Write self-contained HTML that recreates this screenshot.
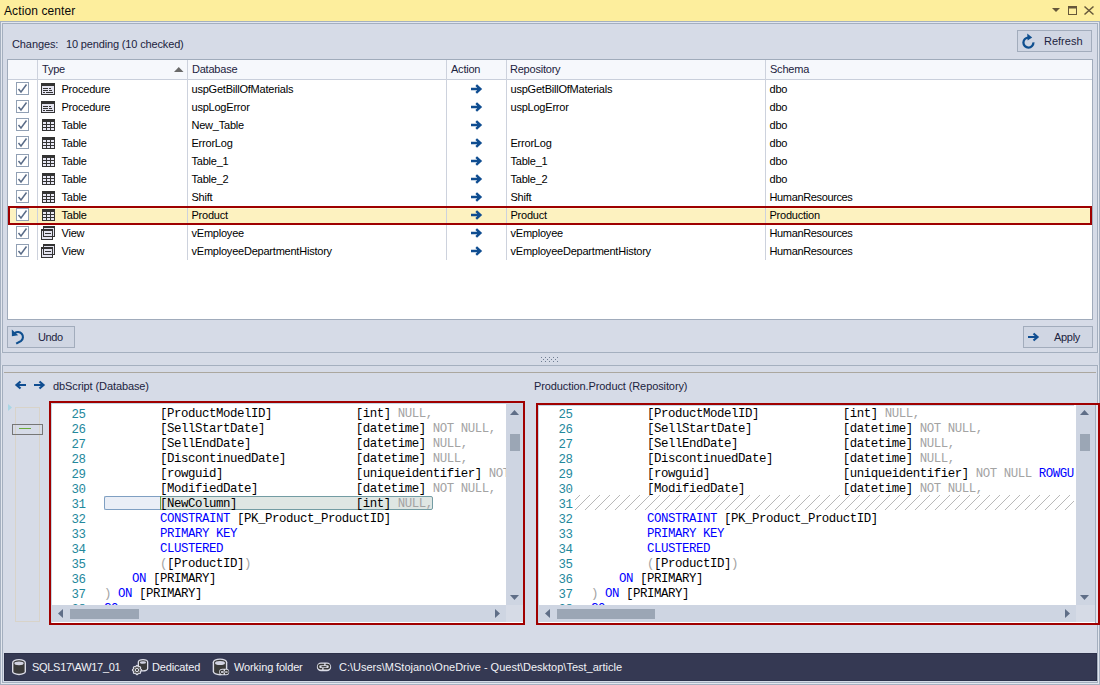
<!DOCTYPE html><html><head><meta charset="utf-8"><style>
*{margin:0;padding:0;box-sizing:border-box}
html,body{width:1100px;height:685px;overflow:hidden;background:#d6dbe7;font-family:"Liberation Sans",sans-serif;font-size:11px;color:#1e1e1e}
.a{position:absolute}
.t{position:absolute;white-space:pre;line-height:13px}
.g{position:absolute;white-space:pre;line-height:13px;letter-spacing:-0.22px;color:#000}
.code{font-family:"Liberation Mono",monospace;font-size:12.4px;letter-spacing:-0.44px;white-space:pre;position:absolute;line-height:15px;color:#000}
.ln{color:#23889c}
.kw{color:#0000ff}
.gr{color:#a3a3a3}
svg{position:absolute;overflow:visible}
</style></head><body>
<div class="a" style="left:0;top:0;width:1100px;height:21px;background:#fdee9d"></div>
<div class="t" style="left:4px;top:5px;font-size:12px;color:#0a0a0a;letter-spacing:0.1px">Action center</div>
<svg style="left:0;top:0" width="1100" height="21"><path d="M1052 8 L1060 8 L1056 12 Z" fill="#65573a"/><rect x="1068.5" y="6.5" width="8" height="8" fill="none" stroke="#65573a"/><rect x="1068" y="6" width="9" height="2.5" fill="#65573a"/><path d="M1084.5 6.5 L1093.5 14.5 M1093.5 6.5 L1084.5 14.5" stroke="#65573a" stroke-width="1.5"/></svg>
<div class="a" style="left:0;top:21px;width:1100px;height:664px;background:#a5b0c0"></div>
<div class="a" style="left:1px;top:22px;width:1098px;height:662px;background:#e2e6ee"></div>
<div class="a" style="left:2px;top:23px;width:1096px;height:330px;border:1px solid #a4afbf;background:#d6dbe7"></div>
<div class="a" style="left:1px;top:353px;width:1098px;height:12px;background:#d6dbe7"></div>
<div class="a" style="left:2px;top:365px;width:1096px;height:318px;border:1px solid #a4afbf;background:#d6dbe7"></div>
<div class="a" style="left:4px;top:372px;width:1092px;height:1px;background:#aba79f"></div>
<svg style="left:0;top:0" width="1100" height="685" fill="#6f7d92"><rect x="541" y="357" width="1" height="1"/><rect x="541" y="361" width="1" height="1"/><rect x="545" y="357" width="1" height="1"/><rect x="545" y="361" width="1" height="1"/><rect x="549" y="357" width="1" height="1"/><rect x="549" y="361" width="1" height="1"/><rect x="553" y="357" width="1" height="1"/><rect x="553" y="361" width="1" height="1"/><rect x="557" y="357" width="1" height="1"/><rect x="557" y="361" width="1" height="1"/><rect x="543" y="359" width="1" height="1"/><rect x="547" y="359" width="1" height="1"/><rect x="551" y="359" width="1" height="1"/><rect x="555" y="359" width="1" height="1"/></svg>
<div class="t" style="left:12px;top:38px;color:#1c2340;letter-spacing:-0.1px">Changes:</div>
<div class="t" style="left:66px;top:38px;color:#1c2340;letter-spacing:-0.15px">10 pending (10 checked)</div>
<div class="a" style="left:1017px;top:30px;width:75px;height:22px;border:1px solid #a2acbc;background:#d0d6e3"></div>
<svg style="left:0;top:0" width="1100" height="60"><path d="M1028.5 37.6 A5 5 0 1 0 1033.4 42.4" fill="none" stroke="#0f4f8f" stroke-width="2.3"/><path d="M1027.2 33.6 L1032.2 37.4 L1027.6 40.6 Z" fill="#0f4f8f"/></svg>
<div class="t" style="left:1044px;top:35px;color:#1c2340">Refresh</div>
<div class="a" style="left:7px;top:59px;width:1086px;height:261px;border:1px solid #a0abbb;background:#fff"></div>
<div class="a" style="left:8px;top:60px;width:1084px;height:19px;background:#f6f8fc"></div>
<div class="a" style="left:8px;top:79px;width:1084px;height:1px;background:#c9cfdb"></div>
<div class="a" style="left:10px;top:208px;width:1080px;height:15px;background:#fdf2c0"></div>
<div class="a" style="left:10px;top:208px;width:1080px;height:1px;background:#fffad2"></div>
<div class="a" style="left:37px;top:60px;width:1px;height:200px;background:#cdd2dd"></div>
<div class="a" style="left:187px;top:60px;width:1px;height:200px;background:#cdd2dd"></div>
<div class="a" style="left:446px;top:60px;width:1px;height:200px;background:#cdd2dd"></div>
<div class="a" style="left:506px;top:60px;width:1px;height:200px;background:#cdd2dd"></div>
<div class="a" style="left:765px;top:60px;width:1px;height:200px;background:#cdd2dd"></div>
<div class="a" style="left:8px;top:206px;width:1084px;height:19px;border:2px solid #9e0000"></div>
<div class="g" style="left:42px;top:63px;color:#1c2340">Type</div>
<div class="g" style="left:192px;top:63px;color:#1c2340">Database</div>
<div class="g" style="left:451px;top:63px;color:#1c2340">Action</div>
<div class="g" style="left:510px;top:63px;color:#1c2340">Repository</div>
<div class="g" style="left:770px;top:63px;color:#1c2340">Schema</div>
<svg style="left:0;top:0" width="1100" height="100"><path d="M174 72 L183.5 72 L178.75 67 Z" fill="#6a6a6a"/></svg>
<div class="g" style="left:61.5px;top:83px">Procedure</div>
<div class="g" style="left:191.5px;top:83px">uspGetBillOfMaterials</div>
<div class="g" style="left:510.5px;top:83px">uspGetBillOfMaterials</div>
<div class="g" style="left:769.5px;top:83px">dbo</div>
<div class="g" style="left:61.5px;top:101px">Procedure</div>
<div class="g" style="left:191.5px;top:101px">uspLogError</div>
<div class="g" style="left:510.5px;top:101px">uspLogError</div>
<div class="g" style="left:769.5px;top:101px">dbo</div>
<div class="g" style="left:61.5px;top:119px">Table</div>
<div class="g" style="left:191.5px;top:119px">New_Table</div>
<div class="g" style="left:769.5px;top:119px">dbo</div>
<div class="g" style="left:61.5px;top:137px">Table</div>
<div class="g" style="left:191.5px;top:137px">ErrorLog</div>
<div class="g" style="left:510.5px;top:137px">ErrorLog</div>
<div class="g" style="left:769.5px;top:137px">dbo</div>
<div class="g" style="left:61.5px;top:155px">Table</div>
<div class="g" style="left:191.5px;top:155px">Table_1</div>
<div class="g" style="left:510.5px;top:155px">Table_1</div>
<div class="g" style="left:769.5px;top:155px">dbo</div>
<div class="g" style="left:61.5px;top:173px">Table</div>
<div class="g" style="left:191.5px;top:173px">Table_2</div>
<div class="g" style="left:510.5px;top:173px">Table_2</div>
<div class="g" style="left:769.5px;top:173px">dbo</div>
<div class="g" style="left:61.5px;top:191px">Table</div>
<div class="g" style="left:191.5px;top:191px">Shift</div>
<div class="g" style="left:510.5px;top:191px">Shift</div>
<div class="g" style="left:769.5px;top:191px;letter-spacing:-0.36px">HumanResources</div>
<div class="g" style="left:61.5px;top:209px">Table</div>
<div class="g" style="left:191.5px;top:209px">Product</div>
<div class="g" style="left:510.5px;top:209px">Product</div>
<div class="g" style="left:769.5px;top:209px">Production</div>
<div class="g" style="left:61.5px;top:227px">View</div>
<div class="g" style="left:191.5px;top:227px">vEmployee</div>
<div class="g" style="left:510.5px;top:227px">vEmployee</div>
<div class="g" style="left:769.5px;top:227px;letter-spacing:-0.36px">HumanResources</div>
<div class="g" style="left:61.5px;top:245px">View</div>
<div class="g" style="left:191.5px;top:245px">vEmployeeDepartmentHistory</div>
<div class="g" style="left:510.5px;top:245px">vEmployeeDepartmentHistory</div>
<div class="g" style="left:769.5px;top:245px;letter-spacing:-0.36px">HumanResources</div>
<svg style="left:0;top:0" width="1100" height="330"><rect x="16.5" y="82.5" width="12" height="12" fill="#fff" stroke="#91a0b4"/><path d="M18.5 89 L21 92 L26.5 84.5" fill="none" stroke="#5a6c88" stroke-width="1.5"/><path d="M471 89 L480 89 M476.2 85.2 L480.4 89 L476.2 92.8" fill="none" stroke="#0f4d91" stroke-width="2.4"/><rect x="41.5" y="83.5" width="13" height="11" fill="#e4e4f0" stroke="#333"/><rect x="41" y="83" width="14" height="3" fill="#333"/><path d="M43 88.5h5M49 88.5h2M43 90.5h5M49 90.5h3M43 92.5h2M46 92.5h7" stroke="#333" stroke-width="1"/><rect x="16.5" y="100.5" width="12" height="12" fill="#fff" stroke="#91a0b4"/><path d="M18.5 107 L21 110 L26.5 102.5" fill="none" stroke="#5a6c88" stroke-width="1.5"/><path d="M471 107 L480 107 M476.2 103.2 L480.4 107 L476.2 110.8" fill="none" stroke="#0f4d91" stroke-width="2.4"/><rect x="41.5" y="101.5" width="13" height="11" fill="#e4e4f0" stroke="#333"/><rect x="41" y="101" width="14" height="3" fill="#333"/><path d="M43 106.5h5M49 106.5h2M43 108.5h5M49 108.5h3M43 110.5h2M46 110.5h7" stroke="#333" stroke-width="1"/><rect x="16.5" y="118.5" width="12" height="12" fill="#fff" stroke="#91a0b4"/><path d="M18.5 125 L21 128 L26.5 120.5" fill="none" stroke="#5a6c88" stroke-width="1.5"/><path d="M471 125 L480 125 M476.2 121.2 L480.4 125 L476.2 128.8" fill="none" stroke="#0f4d91" stroke-width="2.4"/><rect x="42" y="119" width="13" height="12" fill="#333"/><rect x="43" y="122" width="3" height="2" fill="#e8e8f4"/><rect x="43" y="125" width="3" height="2" fill="#e8e8f4"/><rect x="43" y="128" width="3" height="2" fill="#e8e8f4"/><rect x="47" y="122" width="3" height="2" fill="#e8e8f4"/><rect x="47" y="125" width="3" height="2" fill="#e8e8f4"/><rect x="47" y="128" width="3" height="2" fill="#e8e8f4"/><rect x="51" y="122" width="3" height="2" fill="#e8e8f4"/><rect x="51" y="125" width="3" height="2" fill="#e8e8f4"/><rect x="51" y="128" width="3" height="2" fill="#e8e8f4"/><rect x="16.5" y="136.5" width="12" height="12" fill="#fff" stroke="#91a0b4"/><path d="M18.5 143 L21 146 L26.5 138.5" fill="none" stroke="#5a6c88" stroke-width="1.5"/><path d="M471 143 L480 143 M476.2 139.2 L480.4 143 L476.2 146.8" fill="none" stroke="#0f4d91" stroke-width="2.4"/><rect x="42" y="137" width="13" height="12" fill="#333"/><rect x="43" y="140" width="3" height="2" fill="#e8e8f4"/><rect x="43" y="143" width="3" height="2" fill="#e8e8f4"/><rect x="43" y="146" width="3" height="2" fill="#e8e8f4"/><rect x="47" y="140" width="3" height="2" fill="#e8e8f4"/><rect x="47" y="143" width="3" height="2" fill="#e8e8f4"/><rect x="47" y="146" width="3" height="2" fill="#e8e8f4"/><rect x="51" y="140" width="3" height="2" fill="#e8e8f4"/><rect x="51" y="143" width="3" height="2" fill="#e8e8f4"/><rect x="51" y="146" width="3" height="2" fill="#e8e8f4"/><rect x="16.5" y="154.5" width="12" height="12" fill="#fff" stroke="#91a0b4"/><path d="M18.5 161 L21 164 L26.5 156.5" fill="none" stroke="#5a6c88" stroke-width="1.5"/><path d="M471 161 L480 161 M476.2 157.2 L480.4 161 L476.2 164.8" fill="none" stroke="#0f4d91" stroke-width="2.4"/><rect x="42" y="155" width="13" height="12" fill="#333"/><rect x="43" y="158" width="3" height="2" fill="#e8e8f4"/><rect x="43" y="161" width="3" height="2" fill="#e8e8f4"/><rect x="43" y="164" width="3" height="2" fill="#e8e8f4"/><rect x="47" y="158" width="3" height="2" fill="#e8e8f4"/><rect x="47" y="161" width="3" height="2" fill="#e8e8f4"/><rect x="47" y="164" width="3" height="2" fill="#e8e8f4"/><rect x="51" y="158" width="3" height="2" fill="#e8e8f4"/><rect x="51" y="161" width="3" height="2" fill="#e8e8f4"/><rect x="51" y="164" width="3" height="2" fill="#e8e8f4"/><rect x="16.5" y="172.5" width="12" height="12" fill="#fff" stroke="#91a0b4"/><path d="M18.5 179 L21 182 L26.5 174.5" fill="none" stroke="#5a6c88" stroke-width="1.5"/><path d="M471 179 L480 179 M476.2 175.2 L480.4 179 L476.2 182.8" fill="none" stroke="#0f4d91" stroke-width="2.4"/><rect x="42" y="173" width="13" height="12" fill="#333"/><rect x="43" y="176" width="3" height="2" fill="#e8e8f4"/><rect x="43" y="179" width="3" height="2" fill="#e8e8f4"/><rect x="43" y="182" width="3" height="2" fill="#e8e8f4"/><rect x="47" y="176" width="3" height="2" fill="#e8e8f4"/><rect x="47" y="179" width="3" height="2" fill="#e8e8f4"/><rect x="47" y="182" width="3" height="2" fill="#e8e8f4"/><rect x="51" y="176" width="3" height="2" fill="#e8e8f4"/><rect x="51" y="179" width="3" height="2" fill="#e8e8f4"/><rect x="51" y="182" width="3" height="2" fill="#e8e8f4"/><rect x="16.5" y="190.5" width="12" height="12" fill="#fff" stroke="#91a0b4"/><path d="M18.5 197 L21 200 L26.5 192.5" fill="none" stroke="#5a6c88" stroke-width="1.5"/><path d="M471 197 L480 197 M476.2 193.2 L480.4 197 L476.2 200.8" fill="none" stroke="#0f4d91" stroke-width="2.4"/><rect x="42" y="191" width="13" height="12" fill="#333"/><rect x="43" y="194" width="3" height="2" fill="#e8e8f4"/><rect x="43" y="197" width="3" height="2" fill="#e8e8f4"/><rect x="43" y="200" width="3" height="2" fill="#e8e8f4"/><rect x="47" y="194" width="3" height="2" fill="#e8e8f4"/><rect x="47" y="197" width="3" height="2" fill="#e8e8f4"/><rect x="47" y="200" width="3" height="2" fill="#e8e8f4"/><rect x="51" y="194" width="3" height="2" fill="#e8e8f4"/><rect x="51" y="197" width="3" height="2" fill="#e8e8f4"/><rect x="51" y="200" width="3" height="2" fill="#e8e8f4"/><rect x="16.5" y="208.5" width="12" height="12" fill="#fff" stroke="#91a0b4"/><path d="M18.5 215 L21 218 L26.5 210.5" fill="none" stroke="#5a6c88" stroke-width="1.5"/><path d="M471 215 L480 215 M476.2 211.2 L480.4 215 L476.2 218.8" fill="none" stroke="#0f4d91" stroke-width="2.4"/><rect x="42" y="209" width="13" height="12" fill="#333"/><rect x="43" y="212" width="3" height="2" fill="#e8e8f4"/><rect x="43" y="215" width="3" height="2" fill="#e8e8f4"/><rect x="43" y="218" width="3" height="2" fill="#e8e8f4"/><rect x="47" y="212" width="3" height="2" fill="#e8e8f4"/><rect x="47" y="215" width="3" height="2" fill="#e8e8f4"/><rect x="47" y="218" width="3" height="2" fill="#e8e8f4"/><rect x="51" y="212" width="3" height="2" fill="#e8e8f4"/><rect x="51" y="215" width="3" height="2" fill="#e8e8f4"/><rect x="51" y="218" width="3" height="2" fill="#e8e8f4"/><rect x="16.5" y="226.5" width="12" height="12" fill="#fff" stroke="#91a0b4"/><path d="M18.5 233 L21 236 L26.5 228.5" fill="none" stroke="#5a6c88" stroke-width="1.5"/><path d="M471 233 L480 233 M476.2 229.2 L480.4 233 L476.2 236.8" fill="none" stroke="#0f4d91" stroke-width="2.4"/><rect x="43.5" y="226.5" width="11" height="10" fill="#e4e4f0" stroke="#333"/><rect x="41.5" y="229.5" width="11" height="10" fill="#e4e4f0" stroke="#333"/><rect x="43.5" y="226.5" width="11" height="10" fill="none" stroke="#333"/><rect x="43" y="226" width="12" height="2" fill="#333"/><rect x="41" y="229" width="12" height="2" fill="#333"/><path d="M45 233.5h6" stroke="#333"/><rect x="16.5" y="244.5" width="12" height="12" fill="#fff" stroke="#91a0b4"/><path d="M18.5 251 L21 254 L26.5 246.5" fill="none" stroke="#5a6c88" stroke-width="1.5"/><path d="M471 251 L480 251 M476.2 247.2 L480.4 251 L476.2 254.8" fill="none" stroke="#0f4d91" stroke-width="2.4"/><rect x="43.5" y="244.5" width="11" height="10" fill="#e4e4f0" stroke="#333"/><rect x="41.5" y="247.5" width="11" height="10" fill="#e4e4f0" stroke="#333"/><rect x="43.5" y="244.5" width="11" height="10" fill="none" stroke="#333"/><rect x="43" y="244" width="12" height="2" fill="#333"/><rect x="41" y="247" width="12" height="2" fill="#333"/><path d="M45 251.5h6" stroke="#333"/></svg>
<div class="a" style="left:7px;top:326px;width:68px;height:22px;border:1px solid #a2acbc;background:#d0d6e3"></div>
<div class="t" style="left:38px;top:331px;color:#1c2340;letter-spacing:-0.4px">Undo</div>
<div class="a" style="left:1023px;top:326px;width:70px;height:22px;border:1px solid #a2acbc;background:#d0d6e3"></div>
<div class="t" style="left:1054px;top:331px;color:#1c2340;letter-spacing:-0.3px">Apply</div>
<svg style="left:0;top:0" width="1100" height="400"><path d="M14.6 333.2 A5 5 0 1 1 21.2 340.8 L16.2 343.6" fill="none" stroke="#0f4f8f" stroke-width="2.1"/><path d="M11.8 329.6 L11.9 336.2 L18.2 335.2 Z" fill="#0f4f8f"/><path d="M1028 337 L1037 337 M1033.5 333.5 L1037.5 337 L1033.5 340.5" fill="none" stroke="#0f4d91" stroke-width="2.2"/><path d="M26 385 L17 385 M20.5 381.5 L16.5 385 L20.5 388.5" fill="none" stroke="#0f4d91" stroke-width="2.2"/><path d="M34 385 L43 385 M39.5 381.5 L43.5 385 L39.5 388.5" fill="none" stroke="#0f4d91" stroke-width="2.2"/></svg>
<div class="t" style="left:53px;top:380px;color:#1c2340;letter-spacing:-0.1px">dbScript (Database)</div>
<div class="t" style="left:534px;top:380px;color:#1c2340;letter-spacing:-0.1px">Production.Product (Repository)</div>
<div class="a" style="left:15px;top:407px;width:25px;height:215px;border:1px solid #d8d3c9"></div>
<div class="a" style="left:12px;top:424px;width:31px;height:11px;border:1px solid #767676"></div>
<div class="a" style="left:19px;top:428px;width:12px;height:1px;background:#6aaa3a"></div>
<svg style="left:0;top:0" width="60" height="420"><path d="M8 404 L12 407.5 L8 411 Z" fill="#a9d6e5"/></svg>
<div class="a" style="left:49px;top:401px;width:476px;height:224px;border:2px solid #a00000;background:#fff;overflow:hidden">
<div class="a" style="left:0;top:0;width:472px;height:1px;background:#c6d6e4"></div>
<div class="a" style="left:0;top:0;width:1px;height:220px;background:#c6d6e4"></div>
<div class="a" style="left:53px;top:93px;width:57px;height:14px;border:1px solid #7f9fc2;border-right:none;background:#eaeef6;border-radius:2px 0 0 2px"></div>
<div class="a" style="left:109px;top:93px;width:273px;height:14px;border:1px solid #739ca3;background:#dfe6e3;border-radius:0 2px 2px 0"></div>
<div class="a" style="left:109px;top:93px;width:1px;height:14px;background:#6aa34a"></div>
<div class="code ln" style="left:20.5px;top:4.5px">25</div>
<div class="code" style="left:53px;top:4.0px">        [ProductModelID]            [int] <span class="gr">NULL,</span></div>
<div class="code ln" style="left:20.5px;top:19.5px">26</div>
<div class="code" style="left:53px;top:19.0px">        [SellStartDate]             [datetime] <span class="gr">NOT NULL,</span></div>
<div class="code ln" style="left:20.5px;top:34.5px">27</div>
<div class="code" style="left:53px;top:34.0px">        [SellEndDate]               [datetime] <span class="gr">NULL,</span></div>
<div class="code ln" style="left:20.5px;top:49.5px">28</div>
<div class="code" style="left:53px;top:49.0px">        [DiscontinuedDate]          [datetime] <span class="gr">NULL,</span></div>
<div class="code ln" style="left:20.5px;top:64.5px">29</div>
<div class="code" style="left:53px;top:64.0px">        [rowguid]                   [uniqueidentifier] <span class="gr">NOT NULL </span><span class="kw">ROWGUIDCOL</span><span class="gr">,</span></div>
<div class="code ln" style="left:20.5px;top:79.5px">30</div>
<div class="code" style="left:53px;top:79.0px">        [ModifiedDate]              [datetime] <span class="gr">NOT NULL,</span></div>
<div class="code ln" style="left:20.5px;top:94.5px">31</div>
<div class="code" style="left:53px;top:94.0px">        [NewColumn]                 [int] <span class="gr">NULL,</span></div>
<div class="code ln" style="left:20.5px;top:109.5px">32</div>
<div class="code" style="left:53px;top:109.0px">        <span class="kw">CONSTRAINT</span> [PK_Product_ProductID]</div>
<div class="code ln" style="left:20.5px;top:124.5px">33</div>
<div class="code" style="left:53px;top:124.0px">        <span class="kw">PRIMARY KEY</span></div>
<div class="code ln" style="left:20.5px;top:139.5px">34</div>
<div class="code" style="left:53px;top:139.0px">        <span class="kw">CLUSTERED</span></div>
<div class="code ln" style="left:20.5px;top:154.5px">35</div>
<div class="code" style="left:53px;top:154.0px">        <span class="gr">(</span>[ProductID]<span class="gr">)</span></div>
<div class="code ln" style="left:20.5px;top:169.5px">36</div>
<div class="code" style="left:53px;top:169.0px">    <span class="kw">ON</span> [PRIMARY]</div>
<div class="code ln" style="left:20.5px;top:184.5px">37</div>
<div class="code" style="left:53px;top:184.0px"><span class="gr">)</span> <span class="kw">ON</span> [PRIMARY]</div>
<div class="code ln" style="left:20.5px;top:199.5px">38</div>
<div class="code" style="left:53px;top:199.0px"><span class="kw">GO</span></div>
<div class="a" style="left:455px;top:0;width:17px;height:202px;background:#ced5e2"></div>
<div class="a" style="left:1px;top:202px;width:454px;height:17px;background:#ced5e2"></div>
<div class="a" style="left:455px;top:202px;width:17px;height:17px;background:#d6dbe6"></div>
<svg style="left:-51px;top:-403px" width="1100" height="700" fill="#5f6e87"><path d="M510 415 L519 415 L514.5 410 Z"/><rect x="510" y="434" width="10" height="17" fill="#9ba6b5"/><path d="M510 595 L519 595 L514.5 600 Z"/><path d="M63 609 L63 618 L58 613.5 Z"/><rect x="70" y="609" width="69" height="10" fill="#9ba6b5"/><path d="M495 609 L495 618 L500 613.5 Z"/></svg>
</div>
<div class="a" style="left:536px;top:403px;width:564px;height:222px;border:2px solid #a00000;background:#fff;overflow:hidden">
<div class="a" style="left:0;top:0;width:560px;height:1px;background:#c6d6e4"></div>
<div class="a" style="left:0;top:0;width:1px;height:218px;background:#c6d6e4"></div>
<svg style="left:37px;top:90px" width="501" height="15"><defs><pattern id="hp" x="0" y="0" width="10" height="10" patternUnits="userSpaceOnUse" patternTransform="translate(0,5)"><g fill="#b8b8b8"><rect x="0" y="9" width="1" height="1"/><rect x="1" y="8" width="1" height="1"/><rect x="2" y="7" width="1" height="1"/><rect x="3" y="6" width="1" height="1"/><rect x="4" y="5" width="1" height="1"/><rect x="5" y="4" width="1" height="1"/><rect x="6" y="3" width="1" height="1"/><rect x="7" y="2" width="1" height="1"/><rect x="8" y="1" width="1" height="1"/><rect x="9" y="0" width="1" height="1"/></g></pattern></defs><rect width="501" height="15" fill="url(#hp)"/></svg>
<div class="code ln" style="left:20.5px;top:2.5px">25</div>
<div class="code" style="left:53px;top:2.0px">        [ProductModelID]            [int] <span class="gr">NULL,</span></div>
<div class="code ln" style="left:20.5px;top:17.5px">26</div>
<div class="code" style="left:53px;top:17.0px">        [SellStartDate]             [datetime] <span class="gr">NOT NULL,</span></div>
<div class="code ln" style="left:20.5px;top:32.5px">27</div>
<div class="code" style="left:53px;top:32.0px">        [SellEndDate]               [datetime] <span class="gr">NULL,</span></div>
<div class="code ln" style="left:20.5px;top:47.5px">28</div>
<div class="code" style="left:53px;top:47.0px">        [DiscontinuedDate]          [datetime] <span class="gr">NULL,</span></div>
<div class="code ln" style="left:20.5px;top:62.5px">29</div>
<div class="code" style="left:53px;top:62.0px">        [rowguid]                   [uniqueidentifier] <span class="gr">NOT NULL </span><span class="kw">ROWGUIDCOL</span><span class="gr">,</span></div>
<div class="code ln" style="left:20.5px;top:77.5px">30</div>
<div class="code" style="left:53px;top:77.0px">        [ModifiedDate]              [datetime] <span class="gr">NOT NULL,</span></div>
<div class="code ln" style="left:20.5px;top:92.5px">31</div>
<div class="code ln" style="left:20.5px;top:107.5px">32</div>
<div class="code" style="left:53px;top:107.0px">        <span class="kw">CONSTRAINT</span> [PK_Product_ProductID]</div>
<div class="code ln" style="left:20.5px;top:122.5px">33</div>
<div class="code" style="left:53px;top:122.0px">        <span class="kw">PRIMARY KEY</span></div>
<div class="code ln" style="left:20.5px;top:137.5px">34</div>
<div class="code" style="left:53px;top:137.0px">        <span class="kw">CLUSTERED</span></div>
<div class="code ln" style="left:20.5px;top:152.5px">35</div>
<div class="code" style="left:53px;top:152.0px">        <span class="gr">(</span>[ProductID]<span class="gr">)</span></div>
<div class="code ln" style="left:20.5px;top:167.5px">36</div>
<div class="code" style="left:53px;top:167.0px">    <span class="kw">ON</span> [PRIMARY]</div>
<div class="code ln" style="left:20.5px;top:182.5px">37</div>
<div class="code" style="left:53px;top:182.0px"><span class="gr">)</span> <span class="kw">ON</span> [PRIMARY]</div>
<div class="code ln" style="left:20.5px;top:197.5px">38</div>
<div class="code" style="left:53px;top:197.0px"><span class="kw">GO</span></div>
<div class="a" style="left:536px;top:0;width:2px;height:200px;background:#fff"></div>
<div class="a" style="left:538px;top:0;width:19px;height:200px;background:#ced5e2"></div>
<div class="a" style="left:1px;top:200px;width:537px;height:17px;background:#ced5e2"></div>
<div class="a" style="left:538px;top:200px;width:19px;height:17px;background:#d6dbe6"></div>
<svg style="left:-538px;top:-405px" width="1100" height="700" fill="#5f6e87"><path d="M1080 415 L1089 415 L1084.5 410 Z"/><rect x="1080" y="434" width="10" height="17" fill="#9ba6b5"/><path d="M1080 595 L1089 595 L1084.5 600 Z"/><path d="M550 609 L550 618 L545 613.5 Z"/><rect x="557" y="609" width="98" height="10" fill="#9ba6b5"/><path d="M1065 609 L1065 618 L1070 613.5 Z"/></svg>
<div class="a" style="left:557px;top:0;width:1px;height:218px;background:#a5b0c0"></div>
<div class="a" style="left:558px;top:0;width:2px;height:218px;background:#e2e6ee"></div>
</div>
<div class="a" style="left:4px;top:653px;width:1093px;height:28px;background:#353953;border:1px solid #2c3049"></div>
<svg style="left:0;top:0" width="1100" height="685"><path d="M12.0 662.6519999999999 A7.0 3.752 0 0 1 26.0 662.6519999999999 L26.0 671.448 A7.0 3.752 0 0 1 12.0 671.448 Z" fill="#dadbe6"/><path d="M13.4 662.6519999999999 A5.6 2.352 0 0 1 24.6 662.6519999999999 L24.6 671.448 A5.6 2.352 0 0 1 13.4 671.448 Z" fill="#3a3a3a"/><ellipse cx="19" cy="663.352" rx="4.699999999999999" ry="1.952" fill="#d2d3e2"/><path d="M137.7 661.88 A5.3 2.98 0 0 1 148.3 661.88 L148.3 668.5200000000001 A5.3 2.98 0 0 1 137.7 668.5200000000001 Z" fill="#dadbe6"/><path d="M139.0 661.88 A4.0 1.68 0 0 1 147.0 661.88 L147.0 668.5200000000001 A4.0 1.68 0 0 1 139.0 668.5200000000001 Z" fill="#3a3a3a"/><ellipse cx="143" cy="662.58" rx="3.1" ry="1.2799999999999998" fill="#d2d3e2"/><circle cx="140.70" cy="670.00" r="1.5" fill="#dadbe6"/><circle cx="139.62" cy="672.62" r="1.5" fill="#dadbe6"/><circle cx="137.00" cy="673.70" r="1.5" fill="#dadbe6"/><circle cx="134.38" cy="672.62" r="1.5" fill="#dadbe6"/><circle cx="133.30" cy="670.00" r="1.5" fill="#dadbe6"/><circle cx="134.38" cy="667.38" r="1.5" fill="#dadbe6"/><circle cx="137.00" cy="666.30" r="1.5" fill="#dadbe6"/><circle cx="139.62" cy="667.38" r="1.5" fill="#dadbe6"/><circle cx="137" cy="670" r="4.1" fill="#dadbe6"/><circle cx="137" cy="670" r="3.0" fill="#4a4a4a"/><circle cx="140.10" cy="670.00" r="0.75" fill="#4a4a4a"/><circle cx="139.19" cy="672.19" r="0.75" fill="#4a4a4a"/><circle cx="137.00" cy="673.10" r="0.75" fill="#4a4a4a"/><circle cx="134.81" cy="672.19" r="0.75" fill="#4a4a4a"/><circle cx="133.90" cy="670.00" r="0.75" fill="#4a4a4a"/><circle cx="134.81" cy="667.81" r="0.75" fill="#4a4a4a"/><circle cx="137.00" cy="666.90" r="0.75" fill="#4a4a4a"/><circle cx="139.19" cy="667.81" r="0.75" fill="#4a4a4a"/><circle cx="137" cy="670" r="1.7" fill="none" stroke="#dadbe6" stroke-width="1"/><path d="M212.7 662.2779999999999 A7.300000000000001 3.878 0 0 1 227.3 662.2779999999999 L227.3 671.522 A7.300000000000001 3.878 0 0 1 212.7 671.522 Z" fill="#dadbe6"/><path d="M214.1 662.2779999999999 A5.9 2.478 0 0 1 225.9 662.2779999999999 L225.9 671.522 A5.9 2.478 0 0 1 214.1 671.522 Z" fill="#3a3a3a"/><ellipse cx="220" cy="662.978" rx="5.0" ry="2.0780000000000003" fill="#d2d3e2"/><rect x="219.2" y="668.8" width="10" height="6.4" rx="3.2" fill="#dadbe6"/><path d="M223.6 670.4 h-1.6 a1.6 1.6 0 0 0 0 3.2 h1.6 M225 673.6 h1.6 a1.6 1.6 0 0 0 0 -3.2 h-1.6" fill="none" stroke="#353535" stroke-width="1.1"/><path d="M222.6 672 h4" stroke="#353535" stroke-width="0.9"/><rect x="316.8" y="662.6" width="14.4" height="8.6" rx="4.3" fill="#dadbe6"/><path d="M324.2 664.6 h-3.6 a2.1 2.1 0 0 0 0 4.2 h1.6 M323.6 668.8 h3.8 a2.1 2.1 0 0 0 0 -4.2 h-1.8" fill="none" stroke="#363636" stroke-width="1.5"/><path d="M321.5 666.7 h5" stroke="#363636" stroke-width="1.2"/></svg>
<div class="t" style="left:32px;top:661px;color:#f2f2f6;letter-spacing:-0.3px">SQLS17\AW17_01</div>
<div class="t" style="left:152px;top:661px;color:#f2f2f6;letter-spacing:-0.15px">Dedicated</div>
<div class="t" style="left:234px;top:661px;color:#f2f2f6;letter-spacing:-0.15px">Working folder</div>
<div class="t" style="left:339px;top:661px;color:#f2f2f6;letter-spacing:0px">C:\Users\MStojano\OneDrive - Quest\Desktop\Test_article</div>
</body></html>
